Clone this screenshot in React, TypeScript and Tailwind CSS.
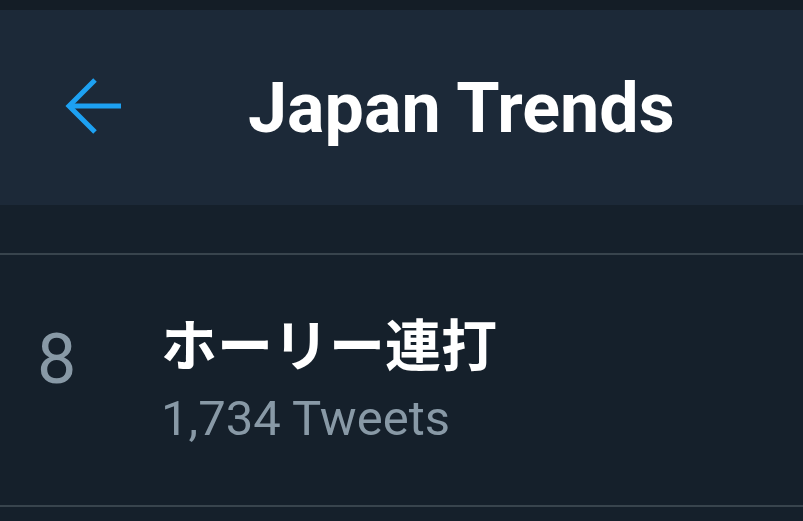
export default function App() {
  return (
    <div className="w-[803px] h-[521px] overflow-hidden bg-[#15202b]" style={{ fontFamily: "Roboto, 'Noto Sans CJK JP', sans-serif" }}>
      <div className="h-[10px] bg-[#141d26]" />
      <div className="h-[195px] bg-[#1c2938] flex items-center">
        <div className="w-[248px] pl-[64px] flex items-center">
          <svg width="60" height="58" viewBox="0 0 60 58" className="mt-[-4px]">
            <path d="M5 29 H57" stroke="#1da1f2" strokeWidth="5" fill="none" />
            <path d="M31 3 L5 29 L31 55" stroke="#1da1f2" strokeWidth="5" fill="none" strokeLinejoin="miter" />
          </svg>
        </div>
        <div className="text-white font-bold text-[70px] leading-none">Japan Trends</div>
      </div>
      <div className="h-[48px]" />
      <div className="border-t-2 border-b-2 border-[#38444d] h-[254px] flex">
        <div className="w-[163px] pl-[37px] pt-[69px] text-[#8899a6] text-[70px] leading-none">8</div>
        <div className="pt-[59px] pl-[-2px] flex flex-col ml-[-2px]">
          <div className="text-white font-bold text-[56px] leading-none" style={{ fontFamily: "'Noto Sans CJK JP', sans-serif" }}>ホーリー連打</div>
          <div className="text-[#8899a6] text-[49px] leading-none mt-[24px]">1,734 Tweets</div>
        </div>
      </div>
    </div>
  );
}
